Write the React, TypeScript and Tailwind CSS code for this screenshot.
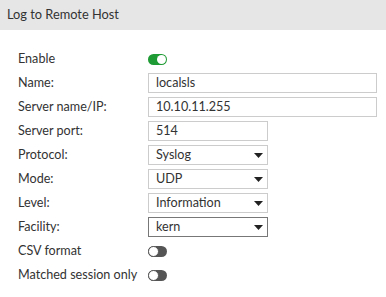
import { ReactNode } from "react"

function Toggle({ on }: { on: boolean }) {
  return on ? (
    <div className="relative h-[11px] w-[19px] rounded-full bg-[#1e9b34]">
      <div className="absolute right-[1px] top-[1px] h-[9px] w-[9px] rounded-full bg-white" />
    </div>
  ) : (
    <div className="relative h-[11px] w-[19px] rounded-full bg-[#555]">
      <div className="absolute left-0 top-0 h-[11px] w-[11px] rounded-full border-[1.5px] border-[#555] bg-white" />
    </div>
  )
}

function Row({ label, children }: { label: string; children: ReactNode }) {
  return (
    <div className="flex h-[20px] items-center">
      <div className="w-[130px] shrink-0 text-[12.6px] text-[#333]">{label}</div>
      {children}
    </div>
  )
}

function TextBox({ value, wide }: { value: string; wide?: boolean }) {
  return (
    <div
      className={`flex h-[20px] items-center border border-[#ccc] bg-white pl-[7px] text-[12.6px] text-[#333] ${
        wide ? "w-[229px]" : "w-[120px]"
      }`}
    >
      {value}
    </div>
  )
}

function Select({ value, focused }: { value: string; focused?: boolean }) {
  return (
    <div
      className={`flex h-[20px] w-[120px] items-center justify-between border bg-white pl-[7px] pr-[4px] text-[12.6px] text-[#333] ${
        focused ? "border-[#777]" : "border-[#ccc]"
      }`}
    >
      <span>{value}</span>
      <svg width="9" height="5" viewBox="0 0 9 5">
        <path d="M0 0 H9 L4.5 5 Z" fill="#222" />
      </svg>
    </div>
  )
}

export default function App() {
  return (
    <div className="h-[297px] w-[386px] bg-white" style={{ fontFamily: "Lato, 'Noto Sans', sans-serif" }}>
      <div className="flex h-[30px] items-center bg-[#e6e6e6] pl-[7px] text-[12.8px] text-[#333]">Log to Remote Host</div>
      <div className="flex flex-col gap-[4px] pl-[18px] pt-[19px]">
        <Row label="Enable">
          <Toggle on />
        </Row>
        <Row label="Name:">
          <TextBox value="localsls" wide />
        </Row>
        <Row label="Server name/IP:">
          <TextBox value="10.10.11.255" wide />
        </Row>
        <Row label="Server port:">
          <TextBox value="514" />
        </Row>
        <Row label="Protocol:">
          <Select value="Syslog" />
        </Row>
        <Row label="Mode:">
          <Select value="UDP" />
        </Row>
        <Row label="Level:">
          <Select value="Information" />
        </Row>
        <Row label="Facility:">
          <Select value="kern" focused />
        </Row>
        <Row label="CSV format">
          <Toggle on={false} />
        </Row>
        <Row label="Matched session only">
          <Toggle on={false} />
        </Row>
      </div>
    </div>
  )
}
